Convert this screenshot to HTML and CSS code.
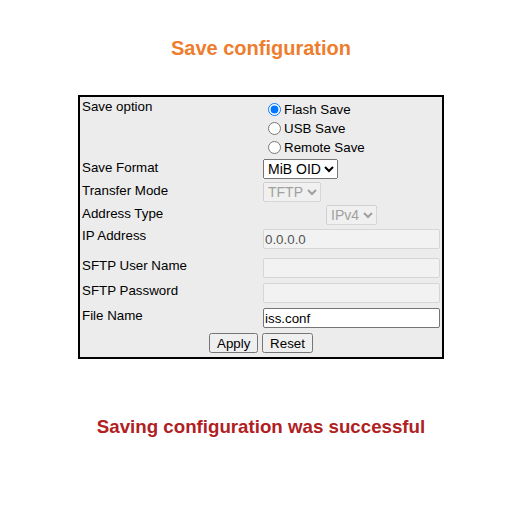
FILE: index.html
```html
<!DOCTYPE html>
<html lang="en">
<head>
  <meta charset="UTF-8" />
  <title>Save configuration</title>
  <link rel="stylesheet" href="styles.css">
</head>
<body>
  <div class="page">
    <h1 class="title">Save configuration</h1>

    <form id="saveForm">
      <table class="conf-table">
        <tr class="row-option">
          <td class="label">Save option</td>
          <td class="value">
            <label class="radio"><input type="radio" name="saveOption" value="flash" checked /> Flash Save</label>
            <label class="radio"><input type="radio" name="saveOption" value="usb" /> USB Save</label>
            <label class="radio"><input type="radio" name="saveOption" value="remote" /> Remote Save</label>
          </td>
        </tr>
        <tr class="row-select">
          <td class="label">Save Format</td>
          <td class="value">
            <select id="saveFormat">
              <option>MiB OID</option>
              <option>CLI</option>
            </select>
          </td>
        </tr>
        <tr class="row-select">
          <td class="label">Transfer Mode</td>
          <td class="value">
            <select id="transferMode" disabled>
              <option>TFTP</option>
              <option>SFTP</option>
            </select>
          </td>
        </tr>
        <tr class="row-select">
          <td class="label">Address Type</td>
          <td class="value center">
            <select id="addressType" disabled>
              <option>IPv4</option>
              <option>IPv6</option>
            </select>
          </td>
        </tr>
        <tr class="row-ip">
          <td class="label">IP Address</td>
          <td class="value"><input type="text" id="ipAddress" value="0.0.0.0" disabled /></td>
        </tr>
        <tr class="row-input">
          <td class="label">SFTP User Name</td>
          <td class="value"><input type="text" id="sftpUser" disabled /></td>
        </tr>
        <tr class="row-input">
          <td class="label">SFTP Password</td>
          <td class="value"><input type="password" id="sftpPassword" disabled /></td>
        </tr>
        <tr class="row-input">
          <td class="label">File Name</td>
          <td class="value"><input type="text" id="fileName" value="iss.conf" /></td>
        </tr>
        <tr class="row-buttons">
          <td colspan="2" class="buttons">
            <button type="submit">Apply</button>
            <button type="reset">Reset</button>
          </td>
        </tr>
      </table>
    </form>

    <h3 class="status">Saving configuration was successful</h3>
  </div>
</body>
</html>
```

FILE: styles.css
```css
body {
  margin: 0;
  background: #fff;
  color: #000;
  font-family: "Liberation Sans", Arial, sans-serif;
  font-size: 13.33px;
}
.page {
  width: 366px;
  margin-left: 78px;
  padding-top: 37px;
}
.title {
  margin: 0 0 35px;
  font-size: 20px;
  line-height: 23px;
  font-weight: 700;
  text-align: center;
  color: #ee7d2e;
}
.conf-table {
  width: 366px;
  border: 2px solid #000;
  border-spacing: 0;
  background: #ececec;
}
.conf-table td {
  padding: 0;
  vertical-align: top;
}
.label {
  width: 182px;
  padding: 2px 0 0 2px !important;
  line-height: 15px;
}
.value {
  padding-right: 2px !important;
}
.center {
  text-align: center;
}
.row-option { height: 61px; }
.row-select { height: 23px; }
.row-ip { height: 29px; }
.row-input { height: 25px; }
.row-buttons { height: 26px; }

.row-option .value {
  padding-top: 3px !important;
}
.radio {
  display: flex;
  align-items: center;
  height: 19px;
}
.radio input {
  margin: 0 3px 0 5px;
  width: 13px;
  height: 13px;
}
.row-select .value {
  padding-top: 1px !important;
}
.row-ip .value,
.row-input .value,
.buttons {
  padding-top: 2px !important;
}
.row-ip .label {
  padding-top: 1px !important;
}

select,
input[type="text"],
input[type="password"],
button {
  font-family: "Liberation Sans", Arial, sans-serif;
  font-size: 13.33px;
}
select {
  height: 20px;
  margin: 0;
  font-size: 14px;
}
input[type="text"],
input[type="password"] {
  box-sizing: border-box;
  width: 177px;
  height: 20px;
  margin: 0;
  padding: 0 1px;
  border: 1px solid #767676;
  border-radius: 2px;
  background: #fff;
  color: #000;
}
input[type="text"]:disabled,
input[type="password"]:disabled {
  border-color: #d6d6d6;
  background: #f2f2f2;
  color: #545454;
}
.buttons {
  text-align: center;
}
.buttons button {
  height: 20px;
  margin: 0;
  padding: 0 6px;
}
.status {
  margin: 57px 0 0;
  font-size: 18.72px;
  line-height: 22px;
  font-weight: 700;
  text-align: center;
  color: #b0201f;
}
```
